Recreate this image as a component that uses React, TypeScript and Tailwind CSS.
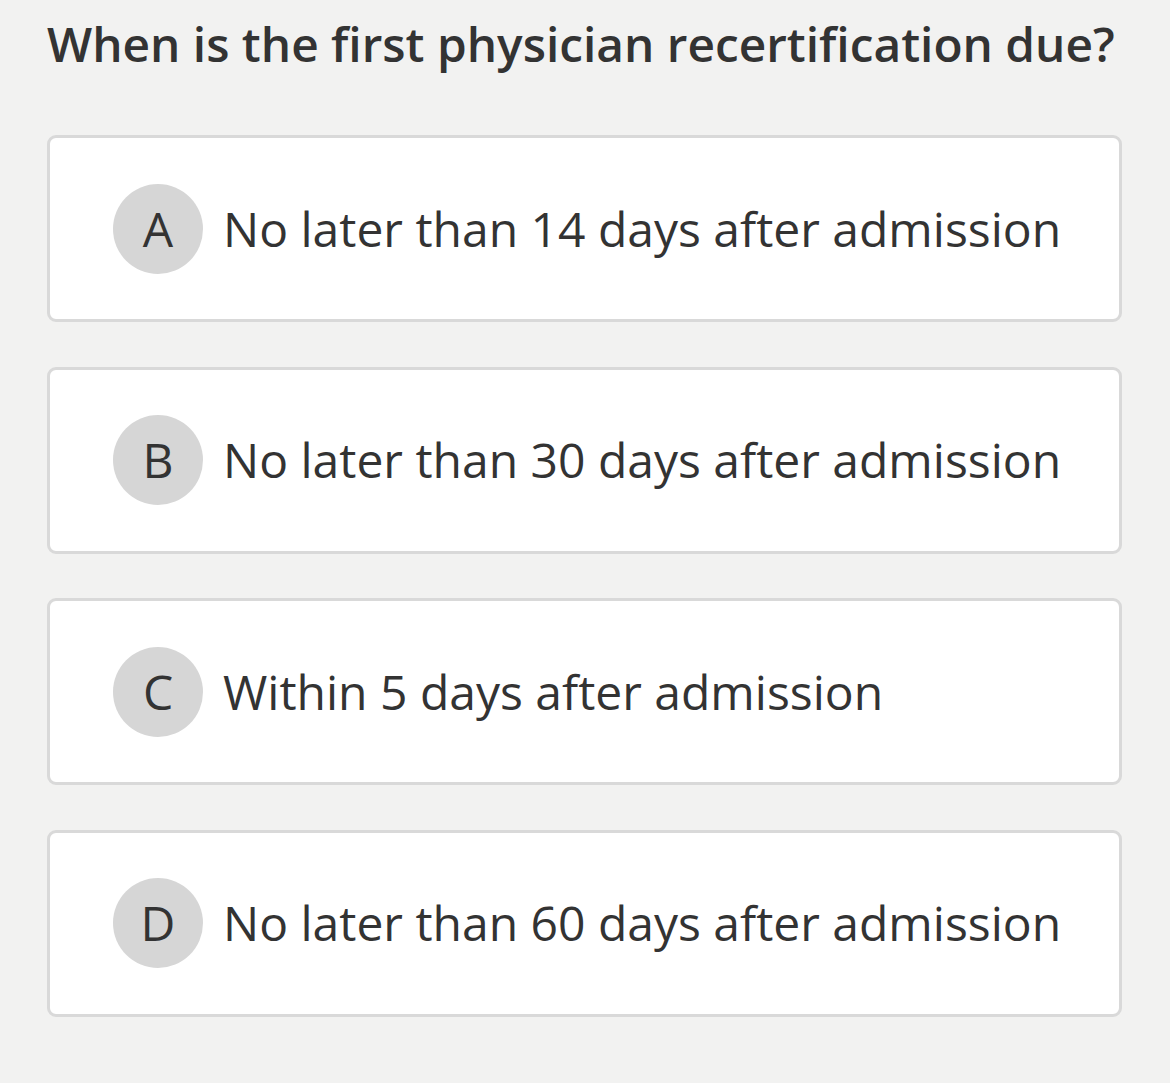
import React from "react";

const options = [
  { letter: "A", text: "No later than 14 days after admission" },
  { letter: "B", text: "No later than 30 days after admission" },
  { letter: "C", text: "Within 5 days after admission" },
  { letter: "D", text: "No later than 60 days after admission" },
];

export default function App() {
  return (
    <div
      className="min-h-[1083px] w-full bg-[#f2f2f1] text-[#333333]"
      style={{ fontFamily: '"Open Sans", "Noto Sans", sans-serif' }}
    >
      <div className="px-[47px] pt-[15px]">
        <h1 className="text-[47.8px] leading-[58px] font-semibold">
          When is the first physician recertification due?
        </h1>
        <div className="mt-[62px] flex flex-col gap-[44.5px] pr-[1px]">
          {options.map((o) => (
            <div
              key={o.letter}
              className="flex h-[187px] items-center rounded-[9px] border-[3px] border-[#d9d9d9] bg-white pl-[63px]"
            >
              <div className="flex h-[90px] w-[90px] shrink-0 items-center justify-center rounded-full bg-[#d6d6d6] text-[48px] leading-none">
                {o.letter}
              </div>
              <div className="ml-[20px] text-[48px] leading-none">{o.text}</div>
            </div>
          ))}
        </div>
      </div>
    </div>
  );
}
